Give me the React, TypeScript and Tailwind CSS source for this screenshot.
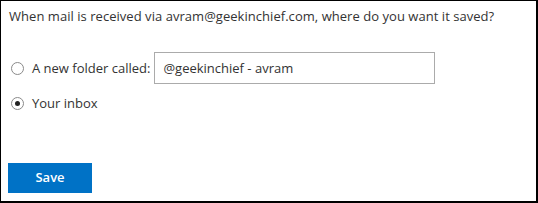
import React from "react";

function Radio({ checked }: { checked?: boolean }) {
  return (
    <span className="flex h-[13px] w-[13px] items-center justify-center rounded-full border border-[#8a8a8a] bg-white">
      {checked && <span className="h-[5px] w-[5px] rounded-full bg-[#222]" />}
    </span>
  );
}

export default function App() {
  return (
    <div
      className="h-[203px] w-[538px] border-l border-t border-r-2 border-b-2 border-black bg-white text-[#333] text-[13px]"
      style={{ fontFamily: '"Open Sans", sans-serif' }}
    >
      <div className="pl-[8px] pt-[5px] leading-[20px] tracking-[0.04px]">
        When mail is received via avram@geekinchief.com, where do you want it saved?
      </div>
      <div className="mt-[26px] flex items-center pl-[10px]">
        <Radio />
        <span className="ml-[8px] leading-[20px]">A new folder called:</span>
        <div className="ml-[4px] flex h-[32px] w-[281px] items-center border border-[#ababab] pl-[8px] leading-[20px]">
          @geekinchief - avram
        </div>
      </div>
      <div className="mt-[9px] flex items-center pl-[10px]">
        <Radio checked />
        <span className="ml-[8px] leading-[20px]">Your inbox</span>
      </div>
      <button className="ml-[7px] mt-[50px] flex h-[30px] w-[84px] items-center justify-center bg-[#0072c6] font-semibold text-white">
        Save
      </button>
    </div>
  );
}
